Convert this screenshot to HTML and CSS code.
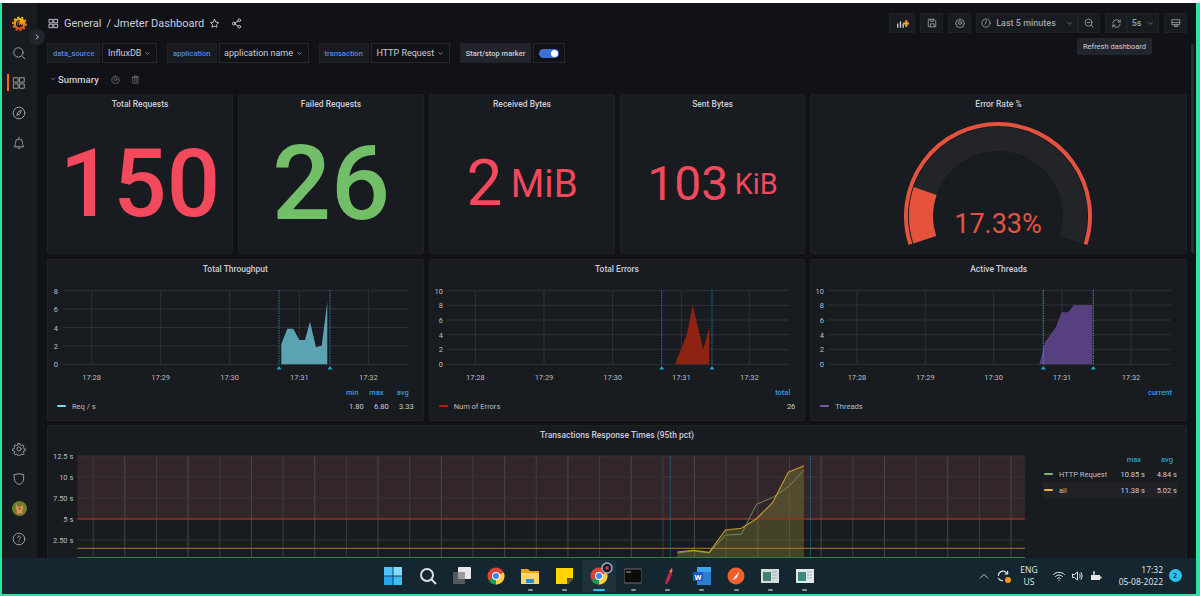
FILE: index.html
```html
<!DOCTYPE html>
<html lang="en">
<head>
    <meta charset="UTF-8">
    <title>Jmeter Dashboard</title>
    <link rel="stylesheet" href="styles.css">
</head>
<body>
<svg class="defs" width="0" height="0">
    <defs>
        <linearGradient id="logo-fill" x1="0" y1="0" x2="0" y2="1">
            <stop offset="0" stop-color="#fbca0a"/>
            <stop offset="1" stop-color="#f0431f"/>
        </linearGradient>
    </defs>
    <symbol id="i-grid" viewBox="0 0 24 24"><path d="M3 3h7.500v7.500H3zM13.500 3H21v7.500h-7.500zM3 13.500h7.500V21H3zM13.500 13.500H21V21h-7.500z"/></symbol>
    <symbol id="i-gear" viewBox="0 0 24 24"><circle cx="12" cy="12" r="3.500"/><path d="M10.500 2.500h3l.6 2.800 2 .9 2.500-1.500 2.100 2.100-1.500 2.500.9 2 2.800.6v3l-2.800.6-.9 2 1.500 2.500-2.100 2.100-2.500-1.500-2 .9-.6 2.800h-3l-.6-2.800-2-.9-2.500 1.500-2.100-2.100 1.500-2.500-.9-2-2.800-.6v-3l2.800-.6.9-2-1.500-2.500 2.100-2.100 2.500 1.500 2-.9z"/></symbol>
    <symbol id="i-chev" viewBox="0 0 24 24"><path d="M6 9l6 6 6-6"/></symbol>
    <symbol id="i-sync" viewBox="0 0 24 24"><path d="M4 11a8 8 0 0 1 14-4.500L20 8.500M20 4v4.500h-4.500M20 13a8 8 0 0 1-14 4.500L4 15.500M4 20v-4.500h4.500"/></symbol>
</svg>

<div class="top-strip"></div>
<div class="frame">
    <div class="app">
        <nav class="sidebar">
            <div class="nav-item">
                <svg class="logo" viewBox="0 0 24 24">
                    <circle cx="12" cy="12.500" r="9.500" fill="url(#logo-fill)"/>
                    <circle cx="12" cy="12.500" r="10.500" fill="none" stroke="url(#logo-fill)" stroke-width="2.500" stroke-dasharray="3.500 3"/>
                    <path d="M12.500 7.500a5 5 0 1 0 4.500 6.500M12 11a2.200 2.200 0 1 0 2.200 2.200" fill="none" stroke="#181b1f" stroke-width="1.800"/>
                </svg>
            </div>
            <div class="nav-item"><svg class="icon nav-icon" viewBox="0 0 24 24"><circle cx="11" cy="11" r="8"/><path d="M17 17l5 5"/></svg></div>
            <div class="nav-item active"><svg class="icon nav-icon"><use href="#i-grid"/></svg></div>
            <div class="nav-item"><svg class="icon nav-icon" viewBox="0 0 24 24"><circle cx="12" cy="12" r="10"/><path d="M16 8l-2.500 5.500L8 16l2.500-5.500z"/></svg></div>
            <div class="nav-item"><svg class="icon nav-icon" viewBox="0 0 24 24"><path d="M4 18c2-2 2-4 2-7a6 6 0 0 1 12 0c0 3 0 5 2 7zM10 21h4M12 3V2"/></svg></div>
            <div class="nav-spacer"></div>
            <div class="nav-item"><svg class="icon nav-icon"><use href="#i-gear"/></svg></div>
            <div class="nav-item"><svg class="icon nav-icon" viewBox="0 0 24 24"><path d="M4 4.500 12 3l8 1.500V12c0 5-4 8-8 9.500C8 20 4 17 4 12z"/></svg></div>
            <div class="nav-item">
                <svg class="avatar" viewBox="0 0 24 24">
                    <circle cx="12" cy="12" r="12" fill="#6b7f26"/>
                    <path d="M7 5l3 4h4l3-4 1 7-2 3 1 5H7l1-5-2-3z" fill="#e58a63"/>
                    <circle cx="12" cy="12" r="2" fill="#6b7f26"/>
                </svg>
            </div>
            <div class="nav-item"><svg class="icon nav-icon" viewBox="0 0 24 24"><circle cx="12" cy="12" r="10"/><path d="M9.500 9.500a2.500 2.500 0 1 1 3.800 2.100c-.8.500-1.300 1-1.300 2M12 16.500v.5"/></svg></div>
        </nav>
        <button class="nav-toggle"><svg viewBox="0 0 24 24"><path d="M9 5l7 7-7 7"/></svg></button>

        <main class="main">
            <header class="topbar">
                <div class="crumbs">
                    <svg class="icon crumb-icon"><use href="#i-grid"/></svg>
                    <span class="crumb">General</span>
                    <span class="crumb crumb-sep">/ Jmeter Dashboard</span>
                    <svg class="icon star" viewBox="0 0 24 24"><path d="M12 3l2.800 5.800 6.200.9-4.500 4.400 1 6.300-5.500-3-5.500 3 1-6.300L3 9.700l6.200-.9z"/></svg>
                    <svg class="icon share" viewBox="0 0 24 24"><circle cx="18" cy="5" r="3"/><circle cx="6" cy="12" r="3"/><circle cx="18" cy="19" r="3"/><path d="M8.700 10.500l6.600-4M8.700 13.500l6.600 4"/></svg>
                </div>
                <div class="toolbar">
                    <button class="tool tool-add">
                        <svg viewBox="0 0 24 24"><path class="bars" d="M2 20V12h2.500v8zM7 20V8h2.500v12zM12 20V12h2.500v8z"/><path class="plus" d="M19 6v12M13 12h12"/></svg>
                    </button>
                    <button class="tool tool-sm"><svg class="icon tool-icon" viewBox="0 0 24 24"><path d="M4 3h13l4 4v14H4zM8 3v5h7V3M8 21v-7h9v7"/></svg></button>
                    <button class="tool tool-sm"><svg class="icon tool-icon"><use href="#i-gear"/></svg></button>
                    <div class="tool-group">
                        <button class="tool tool-time">
                            <svg class="icon tool-icon" viewBox="0 0 24 24"><circle cx="12" cy="12" r="10"/><path d="M12 6v6l-3 3"/></svg>
                            <span>Last 5 minutes</span>
                            <svg class="icon chev"><use href="#i-chev"/></svg>
                        </button>
                        <button class="tool tool-zoom"><svg class="icon tool-icon" viewBox="0 0 24 24"><circle cx="11" cy="11" r="8.500"/><path d="M17 17l5 5M7.500 11h7"/></svg></button>
                    </div>
                    <div class="tool-group refresh-group">
                        <button class="tool tool-zoom"><svg class="icon tool-icon refresh-icon"><use href="#i-sync"/></svg></button>
                        <button class="tool tool-rate"><span>5s</span><svg class="icon chev"><use href="#i-chev"/></svg></button>
                        <div class="tooltip">Refresh dashboard</div>
                    </div>
                    <button class="tool tool-sm"><svg class="icon tool-icon" viewBox="0 0 24 24"><path d="M3 4h18v12H3zM3 11h18M8 20h8M9 16v4M15 16v4"/></svg></button>
                </div>
            </header>

            <div class="vars">
                <span class="var-label">data_source</span>
                <span class="var-select">InfluxDB <svg class="icon chev"><use href="#i-chev"/></svg></span>
                <span class="var-label var-next">application</span>
                <span class="var-select">application name <svg class="icon chev"><use href="#i-chev"/></svg></span>
                <span class="var-label var-next">transaction</span>
                <span class="var-select">HTTP Request <svg class="icon chev"><use href="#i-chev"/></svg></span>
                <span class="var-label var-next var-plain">Start/stop marker</span>
                <span class="var-select var-toggle"><span class="switch"><span class="switch-dot"></span></span></span>
            </div>

            <div class="row-title">
                <svg class="icon row-chev"><use href="#i-chev"/></svg>
                <span>Summary</span>
                <svg class="icon row-icon row-gear"><use href="#i-gear"/></svg>
                <svg class="icon row-icon" viewBox="0 0 24 24"><path d="M5 6h14l-1 16H6zM3 6h18M9 6V2h6v4M10 10v8M14 10v8"/></svg>
            </div>

            <section class="stats">
                <div class="panel">
                    <h3 class="panel-title">Total Requests</h3>
                    <div class="stat red stat-a">150</div>
                </div>
                <div class="panel">
                    <h3 class="panel-title">Failed Requests</h3>
                    <div class="stat green stat-b">26</div>
                </div>
                <div class="panel">
                    <h3 class="panel-title">Received Bytes</h3>
                    <div class="stat red stat-c">2<small>MiB</small></div>
                </div>
                <div class="panel">
                    <h3 class="panel-title">Sent Bytes</h3>
                    <div class="stat red stat-d">103<small>KiB</small></div>
                </div>
                <div class="panel">
                    <h3 class="panel-title">Error Rate %</h3>
                    <svg class="gauge" viewBox="0 20 375 138">
                        <path d="M99.500 150.400 A92 92 0 1 1 274.500 150.400" fill="none" stroke="#e5533f" stroke-width="4"/>
                        <path d="M113.800 145.800 A77 77 0 1 1 260.200 145.800" fill="none" stroke="#222428" stroke-width="24"/>
                        <path d="M113.800 145.800 A77 77 0 0 1 114.200 97" fill="none" stroke="#e5533f" stroke-width="24"/>
                        <text class="gauge-value" x="187" y="139" text-anchor="middle">17.33%</text>
                    </svg>
                </div>
            </section>

            <section class="graphs">
                <div class="panel">
                    <h3 class="panel-title">Total Throughput</h3>
                    <svg class="chart" viewBox="1 20 375 105">
                        <g class="grid">
                            <path d="M15.700 31.700H361M15.700 50H361M15.700 68.500H361M15.700 87H361M15.700 105.300H361"/>
                            <path d="M44.700 31.700V105.300M113.700 31.700V105.300M182.700 31.700V105.300M252.300 31.700V105.300M321.300 31.700V105.300"/>
                        </g>
                        <path class="area-blue" d="M234.300 105.300V85L240.300 69.700H246.300L252.300 81H258L263 62.700 269 88.300 274.700 86.700 280.300 42.700V105.300Z"/>
                        <path class="marker" d="M232 31V106M283 31V106"/>
                        <path class="tip" d="M232 107l-2.500 3.500h5zM283 107l-2.500 3.500h5z"/>
                        <g class="axis">
                            <text x="11" y="34.500" text-anchor="end">8</text><text x="11" y="53" text-anchor="end">6</text><text x="11" y="71.500" text-anchor="end">4</text><text x="11" y="90" text-anchor="end">2</text><text x="11" y="108" text-anchor="end">0</text>
                            <text x="44.700" y="121" text-anchor="middle">17:28</text><text x="113.700" y="121" text-anchor="middle">17:29</text><text x="182.700" y="121" text-anchor="middle">17:30</text><text x="252.300" y="121" text-anchor="middle">17:31</text><text x="321.300" y="121" text-anchor="middle">17:32</text>
                        </g>
                    </svg>
                    <div class="legend">
                        <div class="legend-head"><span>min</span><span>max</span><span>avg</span></div>
                        <div class="legend-row"><i class="swatch sw-blue"></i><span class="legend-name">Req / s</span><span class="val">1.80</span><span class="val">6.80</span><span class="val">3.33</span></div>
                    </div>
                </div>
                <div class="panel">
                    <h3 class="panel-title">Total Errors</h3>
                    <svg class="chart" viewBox="1 20 375 105">
                        <g class="grid">
                            <path d="M17.700 31.700H360M17.700 46.300H360M17.700 61H360M17.700 75.700H360M17.700 90.300H360M17.700 105.300H360"/>
                            <path d="M46.300 31.700V105.300M115 31.700V105.300M183.700 31.700V105.300M252.300 31.700V105.300M320.300 31.700V105.300"/>
                        </g>
                        <path class="area-red" d="M234.300 105.300H246L257.700 76 263.700 46.300 274.300 90.300 280.300 68.300V105.300Z"/>
                        <path class="marker" d="M232.700 31V106M283 31V106"/>
                        <path class="tip" d="M232.700 107l-2.500 3.500h5zM283 107l-2.500 3.500h5z"/>
                        <g class="axis">
                            <text x="14" y="34.500" text-anchor="end">10</text><text x="14" y="49" text-anchor="end">8</text><text x="14" y="64" text-anchor="end">6</text><text x="14" y="78.500" text-anchor="end">4</text><text x="14" y="93" text-anchor="end">2</text><text x="14" y="108" text-anchor="end">0</text>
                            <text x="46.300" y="121" text-anchor="middle">17:28</text><text x="115" y="121" text-anchor="middle">17:29</text><text x="183.700" y="121" text-anchor="middle">17:30</text><text x="252.300" y="121" text-anchor="middle">17:31</text><text x="320.300" y="121" text-anchor="middle">17:32</text>
                        </g>
                    </svg>
                    <div class="legend">
                        <div class="legend-head"><span>total</span></div>
                        <div class="legend-row"><i class="swatch sw-red"></i><span class="legend-name">Num of Errors</span><span class="val">26</span></div>
                    </div>
                </div>
                <div class="panel">
                    <h3 class="panel-title">Active Threads</h3>
                    <svg class="chart" viewBox="1 20 375 105">
                        <g class="grid">
                            <path d="M18.300 31.300H361M18.300 46H361M18.300 61H361M18.300 75.700H361M18.300 90.300H361M18.300 105.300H361"/>
                            <path d="M47 31.300V105.300M115.300 31.300V105.300M183.700 31.300V105.300M252 31.300V105.300M321 31.300V105.300"/>
                        </g>
                        <path class="area-purple" d="M229.300 105.300L235 83.300 245.700 68.300 251.700 53.300H258.300L264 46H282.300V105.300Z"/>
                        <path class="marker bright" d="M233.300 31V106M283.300 31V106"/>
                        <path class="tip" d="M233.300 107l-2.500 3.500h5zM283.300 107l-2.500 3.500h5z"/>
                        <g class="axis">
                            <text x="14" y="34.500" text-anchor="end">10</text><text x="14" y="49" text-anchor="end">8</text><text x="14" y="64" text-anchor="end">6</text><text x="14" y="78.500" text-anchor="end">4</text><text x="14" y="93" text-anchor="end">2</text><text x="14" y="108" text-anchor="end">0</text>
                            <text x="47" y="121" text-anchor="middle">17:28</text><text x="115.300" y="121" text-anchor="middle">17:29</text><text x="183.700" y="121" text-anchor="middle">17:30</text><text x="252" y="121" text-anchor="middle">17:31</text><text x="321" y="121" text-anchor="middle">17:32</text>
                        </g>
                    </svg>
                    <div class="legend">
                        <div class="legend-head"><span>current</span></div>
                        <div class="legend-row"><i class="swatch sw-purple"></i><span class="legend-name">Threads</span></div>
                    </div>
                </div>
            </section>

            <section class="panel panel-wide">
                <h3 class="panel-title">Transactions Response Times (95th pct)</h3>
                <div class="wide-body">
                    <svg class="chart-wide" viewBox="1 20 990 115">
                        <defs>
                            <pattern id="vlines" x="45.700" y="0" width="63.300" height="10" patternUnits="userSpaceOnUse">
                                <path class="vline-dim" d="M0.500 0V10"/>
                                <path class="vline" d="M32.100 0V10"/>
                            </pattern>
                        </defs>
                        <rect class="alert-band" x="30.300" y="31" width="947.700" height="63"/>
                        <rect x="30.300" y="31" width="947.700" height="104" fill="url(#vlines)"/>
                        <g class="grid">
                            <path d="M30.300 31H978M30.300 52H978M30.300 73H978M30.300 115H978"/>
                        </g>
                        <path class="area-olive" d="M630.300 127L646.300 125.300 662.200 127.300 678.400 105 694.300 103.300 709.500 93.700 725.800 77.300 741.300 47.300 756.900 40.700V135H630.300Z"/>
                        <path class="line-red" d="M30.300 94H978"/>
                        <path class="line-orange" d="M30.300 123.300H978"/>
                        <path class="line-green" d="M30.300 132.800H978"/>
                        <path class="series-green" d="M630.300 128L646.300 126 662.200 128 678.400 110 694.300 109.300 709.500 79.300 725.800 72.300 741.300 62 756.900 45.300"/>
                        <path class="series-yellow" d="M630.300 127L646.300 125.300 662.200 127.300 678.400 105 694.300 103.300 709.500 93.700 725.800 77.300 741.300 47.300 756.900 40.700"/>
                        <path class="marker thin" d="M623.300 31V135M763.500 31V135"/>
                        <g class="axis">
                            <text x="26.300" y="34" text-anchor="end">12.5 s</text><text x="26.300" y="55" text-anchor="end">10 s</text><text x="26.300" y="76" text-anchor="end">7.50 s</text><text x="26.300" y="97" text-anchor="end">5 s</text><text x="26.300" y="118" text-anchor="end">2.50 s</text>
                        </g>
                    </svg>
                    <div class="legend-side">
                        <div class="legend-head"><span>max</span><span>avg</span></div>
                        <div class="side-row"><i class="swatch sw-green"></i><span class="legend-name">HTTP Request</span><span class="val">10.85 s</span><span class="val">4.84 s</span></div>
                        <div class="side-row side-row-alt"><i class="swatch sw-yellow"></i><span class="legend-name">all</span><span class="val">11.38 s</span><span class="val">5.02 s</span></div>
                    </div>
                </div>
            </section>
        </main>
        <div class="scrollbar"></div>
    </div>

    <footer class="taskbar">
        <div class="task-spacer"></div>
        <div class="task-apps">
            <div class="app-slot">
                <svg class="app-icon" viewBox="0 0 18 18"><path fill="#4cc2ff" d="M0 0h8.600v8.600H0z"/><path fill="#7fdcff" d="M9.400 0H18v8.600H9.400z"/><path fill="#22a7ee" d="M0 9.400h8.600V18H0z"/><path fill="#3cbdf5" d="M9.400 9.400H18V18H9.400z"/></svg>
            </div>
            <div class="app-slot">
                <svg class="app-icon" viewBox="0 0 18 18"><circle cx="8" cy="8" r="6" fill="none" stroke="#d9dde0" stroke-width="2"/><path d="M12.500 12.500L17 17" stroke="#d9dde0" stroke-width="2"/></svg>
            </div>
            <div class="app-slot">
                <svg class="app-icon" viewBox="0 0 18 18"><rect x="0" y="5" width="12" height="12" rx="1" fill="#55595c"/><rect x="5" y="0" width="13" height="12" rx="1" fill="#e8e8e8"/><rect x="5" y="5" width="7" height="7" fill="#9a9c9e"/></svg>
            </div>
            <div class="app-slot">
                <svg class="app-icon"><use href="#chrome"/></svg>
            </div>
            <div class="app-slot open">
                <svg class="app-icon" viewBox="0 0 18 18"><path fill="#e8a80c" d="M0 2h7l2 2h9v3H0z"/><path fill="#fdd663" d="M0 6h18v11H0z"/><path fill="#1f8fe0" d="M5 12h8v4H5z"/></svg>
            </div>
            <div class="app-slot open">
                <svg class="app-icon" viewBox="0 0 18 18"><path fill="#ffd400" d="M0 1h17v11l-5 5H0z"/><path fill="#5c5238" d="M17 11v1l-5 5h-1v-6z"/></svg>
            </div>
            <div class="app-slot current">
                <svg class="app-icon"><use href="#chrome"/></svg>
                <svg class="app-badge" viewBox="0 0 12 12"><circle cx="6" cy="6" r="5" fill="#171a2c" stroke="#9cb4c8" stroke-width="1.400"/><circle cx="6" cy="6" r="1.800" fill="#e0344a"/></svg>
            </div>
            <div class="app-slot open">
                <svg class="app-icon" viewBox="0 0 18 18"><rect y="2" width="18" height="14" rx="1" fill="#0c0c0c" stroke="#6d7174"/><path d="M2 5h5" stroke="#c8c8c8" stroke-width=".8"/></svg>
            </div>
            <div class="app-slot open">
                <svg class="app-icon" viewBox="0 0 18 18"><path d="M6 17C7 11 10 5 13 1c1 4-1 11-5 16z" fill="#b8264c"/><path d="M10 5c1-2 2-3 3-4 .5 1.500.3 3 0 4.500z" fill="#ef7d22"/></svg>
            </div>
            <div class="app-slot open">
                <svg class="app-icon" viewBox="0 0 18 18"><path fill="#2b7cd3" d="M4 0h14v18H4z"/><path fill="#41a5ee" d="M4 0h14v5H4z"/><rect x="0" y="5" width="10" height="9" rx="1" fill="#185abd"/><text class="word-w" x="5" y="12.500" text-anchor="middle">W</text></svg>
            </div>
            <div class="app-slot open">
                <svg class="app-icon" viewBox="0 0 18 18"><circle cx="9" cy="9" r="8.500" fill="#f1602c"/><path d="M12.500 4.500L8 9.500 5.500 13.500 9.500 11z" fill="#fff"/></svg>
            </div>
            <div class="app-slot open">
                <svg class="app-icon" viewBox="0 0 18 18"><rect y="2" width="18" height="14" fill="#d6dcdc"/><rect x="2" y="5" width="8" height="9" fill="#3f8070"/><path d="M11 5h5M11 8h5M11 11h5" stroke="#a9b4b4"/></svg>
            </div>
            <div class="app-slot open">
                <svg class="app-icon" viewBox="0 0 18 18"><rect y="2" width="18" height="14" fill="#e2e8e8"/><rect x="2" y="5" width="8" height="9" fill="#3b8a7e"/><path d="M11 5h5M11 8h5M11 11h5" stroke="#a9b4b4"/></svg>
            </div>
        </div>
        <div class="tray">
            <svg class="icon tray-chev" viewBox="0 0 24 24"><path d="M3 17l9-9 9 9"/></svg>
            <span class="tray-sync">
                <svg class="icon tray-icon" viewBox="0 0 24 24"><path d="M4 11a8 8 0 0 1 14-4.500L20 8.500M20 4v4.500h-4.500M11 20a8 8 0 0 1-7-4"/></svg>
                <i class="tray-dot"></i>
            </span>
            <div class="tray-lang">ENG<br>US</div>
            <svg class="icon tray-icon tray-wifi" viewBox="0 0 24 24"><path d="M1 9c6-6 16-6 22 0M5 13c4-4 10-4 14 0M9 17c2-2 4-2 6 0M12 20.500v.5"/></svg>
            <svg class="icon tray-icon tray-vol" viewBox="0 0 24 24"><path d="M3 9v6h4l6 5V4L7 9zM17 8c2 2.500 2 5.500 0 8M20 5c3 4 3 10 0 14"/></svg>
            <svg class="tray-icon tray-batt" viewBox="0 0 24 24"><path fill="#e4e6e8" d="M2 10h18v10H2zM20 13h3v4h-3z"/><path fill="#e4e6e8" d="M6 3h4l-1 7H7z"/></svg>
            <div class="clock"><div>17:32</div><div>05-08-2022</div></div>
            <span class="notif">2</span>
        </div>
    </footer>
</div>

<svg class="defs" width="0" height="0">
    <symbol id="chrome" viewBox="0 0 18 18">
        <circle cx="9" cy="9" r="8.500" fill="#db4437"/>
        <path d="M9 9L1.600 13.300A8.500 8.500 0 0 0 9 17.500L13.200 10z" fill="#0f9d58"/>
        <path d="M9 9L16.800 5.600A8.500 8.500 0 0 1 9 17.500z" fill="#ffcd40"/>
        <circle cx="9" cy="9" r="4" fill="#fff"/>
        <circle cx="9" cy="9" r="3" fill="#4285f4"/>
    </symbol>
</svg>
</body>
</html>
```

FILE: styles.css
```css
* {
    box-sizing: border-box;
}
html, body {
    margin: 0;
    height: 596px;
    overflow: hidden;
}
body {
    font-family: Roboto, "Liberation Sans", sans-serif;
    background-color: #111217;
    color: #ccccdc;
    width: 1200px;
}
.defs {
    position: absolute;
}
.top-strip {
    height: 3px;
    background-color: #fff;
}
.frame {
    height: 593px;
    display: flex;
    flex-direction: column;
    border-left: 2px solid #2be6a0;
    border-right: 4px solid #2be6a0;
    border-bottom: 2px solid #2be6a0;
}
.app {
    flex: 1;
    min-height: 0;
    display: flex;
    position: relative;
    overflow: hidden;
}

/* icons */
.icon {
    fill: none;
    stroke: currentColor;
    stroke-width: 2;
    stroke-linecap: round;
    stroke-linejoin: round;
    flex: none;
}
.chev {
    width: 7px;
    height: 7px;
}

/* sidebar */
.sidebar {
    width: 35px;
    flex: none;
    background-color: #181b1f;
    display: flex;
    flex-direction: column;
    padding: 5px 0 4px;
    color: #9a9ca3;
}
.nav-item {
    height: 30px;
    flex: none;
    display: flex;
    align-items: center;
    justify-content: center;
    position: relative;
    width: 34px;
}
.nav-item.active::before {
    content: "";
    position: absolute;
    left: 4.500px;
    top: 6px;
    width: 2.500px;
    height: 17px;
    background-color: #f46800;
}
.nav-icon {
    width: 14px;
    height: 14px;
    stroke-width: 1.700;
}
.logo {
    width: 15px;
    height: 15px;
}
.avatar {
    width: 15px;
    height: 15px;
}
.nav-spacer {
    flex: 1;
}
.nav-toggle {
    position: absolute;
    left: 27px;
    top: 26px;
    width: 16px;
    height: 16px;
    padding: 4px;
    border: none;
    border-radius: 50%;
    background-color: #22252b;
}
.nav-toggle svg {
    display: block;
    fill: none;
    stroke: #ccccdc;
    stroke-width: 3;
}

/* main */
.main {
    flex: 1;
    min-width: 0;
    padding: 10px 9px 0 10px;
}
.topbar {
    height: 20px;
    display: flex;
    justify-content: space-between;
    align-items: center;
}
.crumbs {
    display: flex;
    align-items: center;
    font-size: 11px;
}
.crumb-icon {
    width: 11px;
    height: 11px;
    margin: 0 5px 0 1px;
}
.crumb-sep {
    margin-left: 5px;
}
.star {
    width: 11px;
    height: 11px;
    margin-left: 5px;
}
.share {
    width: 11px;
    height: 11px;
    margin-left: 11px;
}
.toolbar {
    display: flex;
    gap: 5px;
    color: #9fa1a8;
}
.tool-group {
    display: flex;
    position: relative;
}
.tool {
    height: 20px;
    display: flex;
    align-items: center;
    justify-content: center;
    background-color: #181b1f;
    border: 1px solid #1f2126;
    color: #9fa1a8;
    font: 500 9px Roboto, sans-serif;
    padding: 0;
}
.tool-add {
    width: 26px;
}
.tool-add svg {
    width: 13px;
    height: 13px;
}
.bars {
    fill: #ccccdc;
}
.plus {
    stroke: #f5a623;
    stroke-width: 4;
}
.tool-sm {
    width: 23px;
}
.tool-icon {
    width: 10px;
    height: 10px;
}
.tool-time {
    width: 102px;
    gap: 5px;
}
.tool-time .chev {
    margin-left: 5px;
}
.tool-zoom {
    width: 22px;
}
.tool-rate {
    width: 32px;
    gap: 6px;
}
.refresh-icon {
    width: 11px;
    height: 11px;
}
.tooltip {
    position: absolute;
    left: -28px;
    top: 25px;
    width: 75px;
    height: 17px;
    background-color: #22252b;
    color: #ccccdc;
    font-size: 7.500px;
    line-height: 17px;
    text-align: center;
    border-radius: 2px;
    white-space: nowrap;
}

/* variables */
.vars {
    margin-top: 10px;
    height: 20px;
    display: flex;
    align-items: stretch;
    gap: 2px;
}
.var-label {
    display: flex;
    align-items: center;
    padding: 0 5px;
    background-color: #181b1f;
    border: 1px solid #1f2126;
    color: #5583e8;
    font-size: 7.600px;
    font-weight: 500;
}
.var-next {
    margin-left: 8px;
}
.var-plain {
    color: #ccccdc;
    background-color: #22252b;
    font-size: 7.500px;
    padding: 0 5px;
}
.var-select {
    display: flex;
    align-items: center;
    gap: 3px;
    padding: 0 4.500px;
    border: 1px solid #25272c;
    background-color: #111217;
    font-size: 9px;
}
.var-toggle {
    padding: 0 5px;
}
.switch {
    width: 20px;
    height: 9px;
    border-radius: 5px;
    background-color: #3d71d9;
    display: flex;
    justify-content: flex-end;
    align-items: center;
    padding-right: 1px;
}
.switch-dot {
    width: 7px;
    height: 7px;
    border-radius: 50%;
    background-color: #fff;
}
.row-title {
    margin: 6px 0 5px;
    height: 20px;
    display: flex;
    align-items: center;
    font-size: 9.500px;
    font-weight: 500;
}
.row-chev {
    width: 6px;
    height: 6px;
    margin: 0 2px 0 3px;
}
.row-icon {
    width: 9px;
    height: 9px;
    color: #6e7076;
    margin-left: 11px;
}
.row-gear {
    margin-left: 12px;
}

/* panels */
.panel {
    background-color: #181b1f;
    border: 1px solid #202226;
    border-radius: 2px;
    min-width: 0;
}
.panel-title {
    margin: 0;
    height: 19px;
    line-height: 19px;
    font-size: 8.500px;
    font-weight: 500;
    text-align: center;
    color: #ccccdc;
}
.stats {
    display: grid;
    grid-template-columns: 186px 186px 186px 185px 1fr;
    gap: 5px;
    height: 160px;
}
.stat {
    height: 139px;
    display: flex;
    align-items: center;
    justify-content: center;
    font-weight: 500;
}
.stat small {
    font-size: 0.600em;
    margin-left: 0.220em;
}
.red {
    color: #f2495c;
}
.green {
    color: #73bf69;
}
.stat-a {
    font-size: 94px;
}
.stat-b {
    font-size: 104px;
}
.stat-c {
    font-size: 64px;
    font-weight: 400;
}
.stat-d {
    font-size: 48px;
    font-weight: 400;
}
.gauge {
    display: block;
    width: 375px;
    height: 138px;
}
.gauge-value {
    font-size: 27px;
    fill: #e5533f;
}

/* graphs */
.graphs {
    margin-top: 5px;
    display: grid;
    grid-template-columns: repeat(3, 1fr);
    gap: 5px;
    height: 161px;
}
.chart {
    display: block;
    width: 375px;
    height: 105px;
}
.grid path {
    fill: none;
    stroke: #35373c;
    stroke-width: 0.800;
}
.axis text {
    font-size: 7.500px;
    fill: #bcbdc6;
}
.marker {
    fill: none;
    stroke: #12839f;
    stroke-width: 1;
    stroke-dasharray: 1.500 1;
}
.marker.bright {
    stroke: #19a6cf;
}
.marker.thin {
    stroke-width: 0.800;
}
.tip {
    fill: #19a6cf;
}
.area-blue {
    fill: #5ba3b2;
}
.area-red {
    fill: #8e2314;
}
.area-purple {
    fill: #56407f;
}
.legend {
    height: 35px;
    margin-top: 1px;
    font-size: 7.500px;
}
.legend-head {
    height: 14px;
    display: flex;
    justify-content: flex-end;
    align-items: center;
    padding-right: 14px;
    color: #2f9bdc;
    font-weight: 500;
}
.legend-head span {
    width: 25px;
    text-align: right;
}
.legend-head span:first-child {
    width: auto;
}
.legend-row {
    height: 14px;
    display: flex;
    align-items: center;
    padding: 0 9px;
}
.swatch {
    width: 9px;
    height: 2.500px;
    border-radius: 1px;
    margin-right: 6px;
    flex: none;
}
.sw-blue { background-color: #73dcf2; }
.sw-red { background-color: #c4170f; }
.sw-purple { background-color: #7a5bb0; }
.sw-green { background-color: #7eb26d; }
.sw-yellow { background-color: #eab839; }
.legend-name {
    flex: 1;
    color: #bcbdc6;
}
.val {
    width: 25px;
    text-align: right;
}

/* wide panel */
.panel-wide {
    margin-top: 5px;
    height: 180px;
}
.wide-body {
    display: flex;
}
.chart-wide {
    display: block;
    width: 990px;
    height: 115px;
    flex: none;
}
.alert-band {
    fill: #33262a;
}
.vline {
    stroke: #4a4b4f;
    stroke-width: 0.900;
}
.vline-dim {
    stroke: #3e3f44;
    stroke-width: 0.900;
}
.area-olive {
    fill: rgba(130, 125, 50, 0.420);
}
.line-red {
    stroke: #9a2c24;
    stroke-width: 1.300;
}
.line-orange {
    stroke: #a9772b;
    stroke-width: 1;
}
.line-green {
    stroke: #2e8048;
    stroke-width: 1.500;
}
.series-green {
    fill: none;
    stroke: #6f8c55;
    stroke-width: 1;
}
.series-yellow {
    fill: none;
    stroke: #c8962f;
    stroke-width: 1.100;
}
.legend-side {
    width: 135px;
    margin-left: 5px;
    font-size: 7.500px;
}
.legend-side .legend-head {
    height: 13px;
    margin-top: 8px;
    padding-right: 5px;
}
.legend-side .legend-head span {
    width: 32px;
}
.legend-side .legend-head span:first-child {
    width: 32px;
}
.side-row {
    height: 16px;
    display: flex;
    align-items: center;
    padding: 0 1px;
}
.side-row .val {
    width: 32px;
    white-space: nowrap;
}
.side-row-alt {
    background-color: #202226;
}
.scrollbar {
    position: absolute;
    right: 2px;
    top: 41px;
    width: 3px;
    height: 209px;
    border-radius: 2px;
    background-color: #2a2c30;
}

/* taskbar */
.taskbar {
    height: 36.500px;
    flex: none;
    background-color: #14262f;
    display: grid;
    grid-template-columns: 1fr auto 1fr;
    align-items: center;
    position: relative;
}
.task-apps {
    display: flex;
}
.app-slot {
    width: 34.300px;
    height: 32px;
    display: flex;
    align-items: center;
    justify-content: center;
    position: relative;
    border-radius: 3px;
}
.app-icon {
    width: 18px;
    height: 18px;
}
.app-slot.open::after,
.app-slot.current::after {
    content: "";
    position: absolute;
    left: 50%;
    bottom: 1px;
    width: 5px;
    height: 2px;
    margin-left: -2.500px;
    border-radius: 1px;
    background-color: #8b9499;
}
.app-slot.current {
    background-color: #1f323c;
}
.app-slot.current::after {
    width: 12px;
    margin-left: -6px;
    background-color: #2bc4ee;
}
.app-badge {
    position: absolute;
    left: 19px;
    top: 2px;
    width: 12px;
    height: 12px;
}
.word-w {
    font-size: 8px;
    font-weight: 700;
    fill: #fff;
}
.tray {
    display: flex;
    align-items: center;
    justify-content: flex-end;
    padding-right: 14.500px;
    color: #e4e6e8;
    font-family: "Open Sans", sans-serif;
    font-size: 8.500px;
}
.tray-chev {
    width: 10px;
    height: 10px;
    margin-right: 7px;
}
.tray-sync {
    position: relative;
    height: 14px;
    margin-right: 8px;
}
.tray-icon {
    width: 14px;
    height: 14px;
    display: block;
}
.tray-dot {
    position: absolute;
    right: -1px;
    bottom: 0;
    width: 6px;
    height: 6px;
    border-radius: 50%;
    background-color: #f7941d;
}
.tray-lang {
    width: 22px;
    text-align: center;
    line-height: 12px;
    margin-right: 13px;
}
.tray-wifi {
    width: 12px;
    height: 12px;
}
.tray-vol {
    width: 12px;
    height: 12px;
    margin-left: 6px;
}
.tray-batt {
    width: 12px;
    height: 12px;
    margin-left: 7px;
}
.clock {
    width: 48px;
    margin-left: 13px;
    text-align: right;
    line-height: 12px;
    white-space: nowrap;
}
.notif {
    width: 13px;
    height: 13px;
    margin-left: 5.500px;
    border-radius: 50%;
    background-color: #2bc4ee;
    color: #123;
    font-size: 7.500px;
    font-weight: 600;
    line-height: 13px;
    text-align: center;
}
```
